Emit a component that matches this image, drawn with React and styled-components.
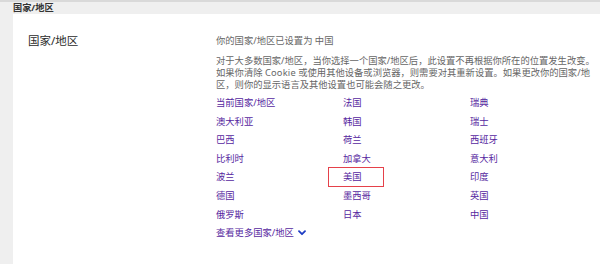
import React from 'react';
import styled, { createGlobalStyle } from 'styled-components';

const GlobalStyle = createGlobalStyle`
  html, body {
    margin: 0;
    padding: 0;
    background: #efefef;
  }
  body {
    font-family: "Noto Sans", "Noto Sans CJK SC", sans-serif;
  }
`;

const Page = styled.div`
  width: 600px;
  height: 264px;
  overflow: hidden;
  border-top: 2px solid #d9d9d9;
  box-sizing: border-box;
  display: flex;
  flex-direction: column;
`;

const Crumb = styled.div`
  height: 12px;
  padding-left: 13px;
  font-size: 9.2px;
  line-height: 11px;
  font-weight: 700;
  color: #333;
`;

const Panel = styled.section`
  flex: 1;
  margin-left: 13px;
  background: #fff;
  display: flex;
  padding: 20px 0 0 15px;
`;

const Title = styled.h2`
  margin: 0;
  width: 188px;
  flex-shrink: 0;
  font-size: 11.5px;
  line-height: 14px;
  font-weight: 400;
  color: #2b2b2b;
`;

const Body = styled.div`
  width: 384px;
  font-size: 9.3px;
  color: #666;
`;

const Status = styled.p`
  margin: 0;
  line-height: 14px;
`;

const Note = styled.p`
  margin: 7px 0 0;
  line-height: 12px;
  white-space: nowrap;

  & .cookie {
    letter-spacing: 0.2px;
  }
`;

const Grid = styled.div`
  margin-top: 3px;
  display: grid;
  grid-template-columns: 127px 127px 1fr;
  grid-auto-rows: 18.6px;
  align-items: center;
`;

const Item = styled.a`
  position: relative;
  color: #5627a0;
  text-decoration: none;
  line-height: 18.6px;
`;

const Highlight = styled.span`
  position: absolute;
  left: -15px;
  top: -1px;
  width: 54px;
  height: 18px;
  border: 1.5px solid #e5414a;
`;

const More = styled.a`
  display: inline-flex;
  align-items: center;
  gap: 4px;
  color: #5627a0;
  text-decoration: none;
  line-height: 18.6px;
`;

const Chevron = () => (
  <svg width="8" height="6" viewBox="0 0 8 6" fill="none">
    <path d="M1 1.2 L4 4.2 L7 1.2" stroke="#1f3ec4" strokeWidth="1.8" strokeLinecap="round" strokeLinejoin="round" />
  </svg>
);

const countries = [
  '当前国家/地区', '法国', '瑞典',
  '澳大利亚', '韩国', '瑞士',
  '巴西', '荷兰', '西班牙',
  '比利时', '加拿大', '意大利',
  '波兰', '美国', '印度',
  '德国', '墨西哥', '英国',
  '俄罗斯', '日本', '中国',
];

export default function App() {
  return (
    <>
      <GlobalStyle />
      <Page>
        <Crumb>国家/地区</Crumb>
        <Panel>
          <Title>国家/地区</Title>
          <Body>
            <Status>你的国家/地区已设置为 中国</Status>
            <Note>
              对于大多数国家/地区，当你选择一个国家/地区后，此设置不再根据你所在的位置发生改变。
              <br />
              如果你清除 <span className="cookie">Cookie</span> 或使用其他设备或浏览器，则需要对其重新设置。如果更改你的国家/地
              <br />
              区，则你的显示语言及其他设置也可能会随之更改。
            </Note>
            <Grid>
              {countries.map((name) => (
                <Item key={name} href="#">
                  {name === '美国' && <Highlight />}
                  {name}
                </Item>
              ))}
              <More href="#">
                查看更多国家/地区
                <Chevron />
              </More>
            </Grid>
          </Body>
        </Panel>
      </Page>
    </>
  );
}
